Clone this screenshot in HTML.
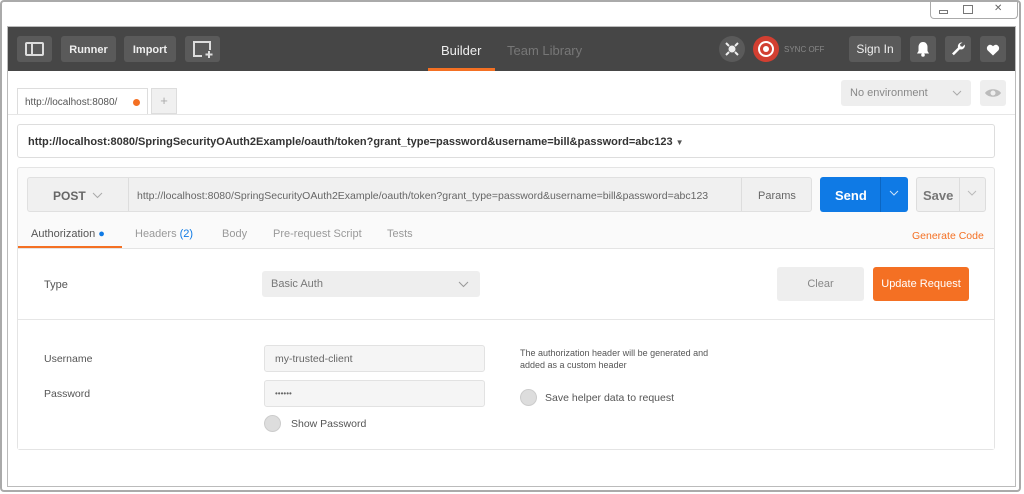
<!DOCTYPE html>
<html><head><meta charset="utf-8"><style>
*{box-sizing:border-box;margin:0;padding:0}
body{width:1024px;height:494px;background:#fff;font-family:"Liberation Sans",sans-serif;position:relative;overflow:hidden;font-size:11px;color:#555}
.a{position:absolute}
.btn{position:absolute;background:#5a5a5a;border-radius:3px;color:#eee;font-weight:bold;font-size:11px;text-align:center}
.g{color:#999}
svg{position:absolute}
.btn svg,.ic svg{left:0;top:0}
</style></head><body>
<div class="a" style="left:0;top:0;width:1021px;height:492px;border:2px solid #aaa;border-radius:4px;background:#fff"></div>
<div class="a" style="left:7px;top:26px;width:1009px;height:461px;border:1px solid #bbb"></div>
<div class="a" style="left:930px;top:2px;width:88px;height:17px;border:1px solid #aaa;border-top:none;border-radius:0 0 4px 4px;font-size:10px;color:#666">
<span class="a" style="left:8px;top:8px;width:9px;height:4px;border:1px solid #777"></span>
<span class="a" style="left:32px;top:3px;width:10px;height:9px;border:1px solid #777"></span>
<span class="a" style="left:63px;top:1px">✕</span></div>
<div class="a" style="left:8px;top:27px;width:1007px;height:44px;background:#464646"></div>
<div class="btn" style="left:17px;top:36px;width:35px;height:26px"><span class="a" style="left:8px;top:6px;width:19px;height:14px;border:2px solid #ddd;border-radius:2px"></span><span class="a" style="left:14px;top:7px;width:2px;height:12px;background:#ddd"></span></div>
<div class="btn" style="left:61px;top:36px;width:55px;height:26px;line-height:28px">Runner</div>
<div class="btn" style="left:124px;top:36px;width:52px;height:26px;line-height:28px">Import</div>
<div class="btn" style="left:185px;top:36px;width:35px;height:26px"><svg width="35" height="26" viewBox="0 0 35 26"><path d="M17 20H9V6h16v8" fill="none" stroke="#ddd" stroke-width="2"/><path d="M24 15v7M20.5 18.5h7" stroke="#ddd" stroke-width="2"/></svg></div>
<div class="a" style="left:441px;top:43px;color:#eee;font-size:13px">Builder</div>
<div class="a" style="left:428px;top:68px;width:67px;height:3px;background:#f47023"></div>
<div class="a" style="left:507px;top:43px;color:#777;font-size:13px">Team Library</div>
<div class="a ic" style="left:719px;top:36px;width:26px;height:26px;border-radius:50%;background:#5a5a5a"><svg width="26" height="26"><circle cx="13" cy="13" r="3.5" fill="#eee"/><path d="M7 7l3 3M19 7l-3 3M7 19l3-3M19 19l-3-3" stroke="#eee" stroke-width="2"/></svg></div>
<div class="a" style="left:753px;top:36px;width:26px;height:26px;border-radius:50%;background:#d23f31"><span class="a" style="left:5px;top:5px;width:16px;height:16px;border:2px solid #fff;border-radius:50%"></span><span class="a" style="left:10px;top:10px;width:6px;height:6px;background:#fff;border-radius:50%"></span></div>
<div class="a" style="left:784px;top:45px;color:#888;font-size:8px">SYNC OFF</div>
<div class="btn" style="left:849px;top:36px;width:52px;height:26px;line-height:27px;font-weight:normal;font-size:12px">Sign In</div>
<div class="btn" style="left:910px;top:36px;width:26px;height:26px"><svg width="26" height="26"><path d="M13 6c-3 0-4.5 2.5-4.5 5v4L7 17.5h12L17.5 15v-4c0-2.5-1.5-5-4.5-5z" fill="#fff"/><circle cx="13" cy="19" r="1.8" fill="#fff"/></svg></div>
<div class="btn" style="left:945px;top:36px;width:26px;height:26px"><svg width="26" height="26"><path d="M17.5 6.5a4 4 0 00-4.5 5L7 17.5l1.8 1.8 6-6a4 4 0 005-4.8l-2.3 2.3-2-.5-.5-2z" fill="#fff"/></svg></div>
<div class="btn" style="left:980px;top:36px;width:26px;height:26px"><svg width="26" height="26"><path d="M13 19.5l-5.5-5.3a3.3 3.3 0 015.5-4 3.3 3.3 0 015.5 4z" fill="#fff"/></svg></div>
<div class="a" style="left:17px;top:88px;width:131px;height:27px;border:1px solid #ddd;border-bottom:none;background:#fff;font-size:10px;line-height:27px;padding-left:7px;color:#555">http://localhost:8080/<span class="a" style="left:115px;top:10px;width:7px;height:7px;border-radius:50%;background:#f47023"></span></div>
<div class="a" style="left:151px;top:88px;width:26px;height:26px;background:#f0f0f0;border:1px solid #ddd;text-align:center;line-height:24px;color:#aaa;font-size:13px">+</div>
<div class="a" style="left:8px;top:114px;width:1007px;height:1px;background:#e6e6e6"></div>
<div class="a" style="left:841px;top:80px;width:130px;height:26px;background:#eee;border-radius:3px;line-height:27px;padding-left:9px;color:#888">No environment<svg style="left:111px;top:10px" width="10" height="6"><path d="M1 1l4 4 4-4" fill="none" stroke="#aaa"/></svg></div>
<div class="a ic" style="left:980px;top:80px;width:26px;height:26px;background:#eee;border-radius:3px"><svg width="26" height="26"><path d="M5 13c3-5 13-5 16 0-3 5-13 5-16 0z" fill="#bbb"/><circle cx="13" cy="13" r="2.5" fill="#eee"/></svg></div>
<div class="a" style="left:17px;top:124px;width:978px;height:34px;border:1px solid #ddd;border-radius:3px;font-weight:bold;font-size:11px;color:#333;line-height:34px;padding-left:10px">http://localhost:8080/SpringSecurityOAuth2Example/oauth/token?grant_type=password&amp;username=bill&amp;password=abc123 <span style="font-size:8px;color:#555">▼</span></div>
<div class="a" style="left:17px;top:167px;width:978px;height:283px;border:1px solid #e4e4e4;border-radius:3px;background:#fafafa"></div>
<div class="a" style="left:18px;top:248px;width:976px;height:201px;background:#fff;border-top:1px solid #e4e4e4"></div>
<div class="a" style="left:27px;top:177px;width:785px;height:35px;background:#f0f0f0;border:1px solid #e0e0e0;border-radius:3px"></div>
<div class="a" style="left:53px;top:189px;font-weight:bold;color:#666;font-size:12px">POST</div>
<svg style="left:92px;top:192px" width="11" height="7"><path d="M1 1l4.5 4.5L10 1" fill="none" stroke="#aaa"/></svg>
<div class="a" style="left:128px;top:178px;width:1px;height:33px;background:#ddd"></div>
<div class="a" style="left:137px;top:190px;color:#666;font-size:10.5px">http://localhost:8080/SpringSecurityOAuth2Example/oauth/token?grant_type=password&amp;username=bill&amp;password=abc123</div>
<div class="a" style="left:741px;top:178px;width:1px;height:33px;background:#ddd"></div>
<div class="a" style="left:758px;top:190px;color:#666;font-size:11px">Params</div>
<div class="a" style="left:820px;top:177px;width:88px;height:35px;background:#0f7ae5;border-radius:3px"></div>
<div class="a" style="left:835px;top:188px;color:#fff;font-weight:bold;font-size:13px">Send</div>
<div class="a" style="left:880px;top:177px;width:1px;height:35px;background:#0b66c2"></div>
<svg style="left:889px;top:190px" width="10" height="6"><path d="M1 1l4 4 4-4" fill="none" stroke="#cfe3fa"/></svg>
<div class="a" style="left:916px;top:177px;width:70px;height:35px;background:#f0f0f0;border:1px solid #ddd;border-radius:3px"></div>
<div class="a" style="left:923px;top:188px;color:#777;font-weight:bold;font-size:13px">Save</div>
<div class="a" style="left:959px;top:178px;width:1px;height:33px;background:#ddd"></div>
<svg style="left:967px;top:190px" width="10" height="6"><path d="M1 1l4 4 4-4" fill="none" stroke="#bbb"/></svg>
<div class="a" style="left:31px;top:228px;color:#555">Authorization <span style="color:#0f7ae5">●</span></div>
<div class="a" style="left:18px;top:246px;width:104px;height:2px;background:#f47023"></div>
<div class="a g" style="left:135px;top:228px">Headers <span style="color:#0f7ae5">(2)</span></div>
<div class="a g" style="left:222px;top:228px">Body</div>
<div class="a g" style="left:273px;top:228px">Pre-request Script</div>
<div class="a g" style="left:387px;top:228px">Tests</div>
<div class="a" style="left:912px;top:230px;color:#f47023;font-size:10.5px">Generate Code</div>
<div class="a" style="left:44px;top:279px;color:#555">Type</div>
<div class="a" style="left:262px;top:271px;width:218px;height:26px;background:#eee;border-radius:3px;line-height:27px;padding-left:9px;color:#777">Basic Auth<svg style="left:196px;top:10px" width="11" height="7"><path d="M1 1l4.5 4.5L10 1" fill="none" stroke="#999"/></svg></div>
<div class="a" style="left:777px;top:267px;width:87px;height:34px;background:#eee;border-radius:3px;text-align:center;line-height:35px;color:#888">Clear</div>
<div class="a" style="left:873px;top:267px;width:96px;height:34px;background:#f47023;border-radius:3px;text-align:center;line-height:35px;color:#fff">Update Request</div>
<div class="a" style="left:18px;top:319px;width:976px;height:1px;background:#e6e6e6"></div>
<div class="a" style="left:44px;top:353px;color:#555;font-size:10.5px">Username</div>
<div class="a" style="left:264px;top:345px;width:221px;height:27px;background:#f5f5f5;border:1px solid #e2e2e2;border-radius:3px;line-height:26px;padding-left:10px;color:#666;font-size:10.5px">my-trusted-client</div>
<div class="a" style="left:44px;top:388px;color:#555;font-size:10.5px">Password</div>
<div class="a" style="left:264px;top:380px;width:221px;height:27px;background:#f5f5f5;border:1px solid #e2e2e2;border-radius:3px;line-height:25px;padding-left:10px;color:#666;font-size:8px">••••••</div>
<div class="a" style="left:264px;top:415px;width:17px;height:17px;border-radius:50%;background:#ddd;border:1px solid #ccc"></div>
<div class="a" style="left:291px;top:418px;color:#555;font-size:10.5px">Show Password</div>
<div class="a" style="left:520px;top:347px;color:#555;font-size:9px;line-height:12px">The authorization header will be generated and<br>added as a custom header</div>
<div class="a" style="left:520px;top:389px;width:17px;height:17px;border-radius:50%;background:#ddd;border:1px solid #ccc"></div>
<div class="a" style="left:545px;top:392px;color:#555;font-size:10.5px">Save helper data to request</div>
</body></html>
